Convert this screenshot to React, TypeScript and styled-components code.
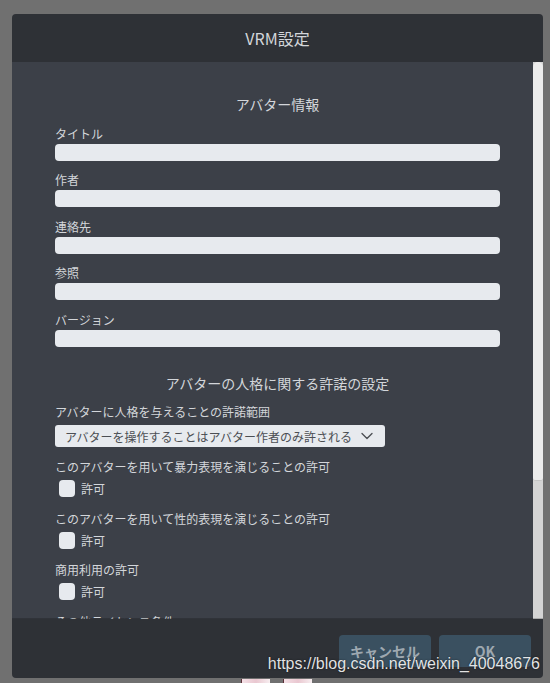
import * as React from 'react';
import styled, { createGlobalStyle } from 'styled-components';
import { ChevronDown } from 'lucide-react';

const colors = {
    page: '#707070',
    header: '#2e3136',
    body: '#3c4048',
    text: '#d3d6da',
    field: '#e7eaee',
    fieldText: '#4c4f54',
    button: '#3a5060',
    buttonText: '#9ea8b0',
    thumb: '#ececec',
    track: '#d4d4d4',
};

const font = `"Noto Sans CJK JP", "Noto Sans", sans-serif`;

const GlobalStyle = createGlobalStyle`
    html, body {
        margin: 0;
        padding: 0;
        background: ${colors.page};
        height: 683px;
        overflow: hidden;
    }
    * { box-sizing: border-box; }
`;

const Page = styled.div`
    position: relative;
    width: 550px;
    height: 683px;
    padding: 14px 0 0 12px;
    font-family: ${font};
`;

const Dialog = styled.section`
    display: flex;
    flex-direction: column;
    width: 531px;
    height: 664px;
    border-radius: 4px;
    overflow: hidden;
    background: ${colors.header};
`;

const Header = styled.header`
    display: flex;
    align-items: center;
    justify-content: center;
    height: 48px;
    flex-shrink: 0;
    color: ${colors.text};
    font-size: 16px;
    box-shadow: 0 1px 0 rgba(0, 0, 0, 0.25);
`;

const BodyRow = styled.div`
    display: flex;
    height: 557px;
    flex-shrink: 0;
`;

const Scroll = styled.div`
    flex: 1;
    overflow: hidden;
    background: ${colors.body};
    padding: 32px 33px 0 43px;
`;

const Scrollbar = styled.div`
    display: flex;
    flex-direction: column;
    width: 10px;
    background: ${colors.track};
`;

const Thumb = styled.div`
    height: 419px;
    background: ${colors.thumb};
    border-radius: 5px 5px 3px 3px;
    border-bottom: 1px solid #c4c4c4;
`;

const SectionTitle = styled.h2<{ top?: number }>`
    margin: ${props => props.top || 0}px 0 11.5px;
    line-height: 20px;
    font-size: 14px;
    font-weight: 400;
    text-align: center;
    color: ${colors.text};
`;

const Group = styled.div<{ after?: number }>`
    display: flex;
    flex-direction: column;
    align-items: flex-start;
    margin-bottom: ${props => (props.after === undefined ? 11.5 : props.after)}px;
`;

const Label = styled.label`
    line-height: 16px;
    font-size: 12px;
    color: ${colors.text};
    white-space: nowrap;
`;

const TextInput = styled.input`
    width: 100%;
    height: 17px;
    margin-top: 2px;
    border: none;
    border-radius: 4px;
    background: ${colors.field};
    outline: none;
`;

const Select = styled.div`
    display: flex;
    align-items: center;
    gap: 5px;
    width: 330px;
    height: 22px;
    margin-top: 5px;
    padding: 0 7px 0 10px;
    border-radius: 3px;
    background: ${colors.field};
    color: ${colors.fieldText};
    font-size: 12px;
    white-space: nowrap;

    svg {
        flex-shrink: 0;
    }
`;

const CheckRow = styled.div`
    display: flex;
    align-items: center;
    gap: 6px;
    height: 17px;
    margin-top: 5px;
    padding-left: 4px;
    font-size: 12px;
    color: ${colors.text};
`;

const Box = styled.span`
    width: 16px;
    height: 17px;
    border-radius: 4px;
    background: ${colors.field};
`;

const Footer = styled.footer`
    display: flex;
    justify-content: flex-end;
    gap: 8px;
    height: 58px;
    padding: 16px 12px 0 0;
    box-shadow: 0 -1px 0 rgba(0, 0, 0, 0.2);
`;

const Button = styled.button`
    width: 92px;
    height: 32px;
    border: none;
    border-radius: 4px;
    background: ${colors.button};
    color: ${colors.buttonText};
    font-family: ${font};
    font-size: 14px;
    font-weight: 700;
`;

const Watermark = styled.div`
    position: absolute;
    right: 10px;
    top: 654px;
    font-family: "Liberation Sans", Arial, sans-serif;
    font-size: 16px;
    line-height: 20px;
    color: rgba(255, 255, 255, 0.88);
    text-shadow: 0 0 2px rgba(0, 0, 0, 0.6);
`;

const Thumbs = styled.div`
    display: flex;
    gap: 13px;
    margin: 1px 0 0 229px;
`;

const Pic = styled.div`
    width: 29px;
    height: 8px;
    background: linear-gradient(90deg, #f4e0e6, #e9c7d0, #f7eef0);
    border-left: 1px solid #5a3038;
`;

const fields = ['タイトル', '作者', '連絡先', '参照', 'バージョン'];

const checks: Array<[string, number]> = [
    ['このアバターを用いて暴力表現を演じることの許可', 14],
    ['このアバターを用いて性的表現を演じることの許可', 13],
    ['商用利用の許可', 14],
];

const App: React.FC = () => {
    return (
        <Page>
            <GlobalStyle />
            <Dialog>
                <Header>VRM設定</Header>
                <BodyRow>
                    <Scroll>
                        <SectionTitle>アバター情報</SectionTitle>
                        {fields.map((f, i) => (
                            <Group key={f} after={i === fields.length - 1 ? 0 : 11.5}>
                                <Label>{f}</Label>
                                <TextInput />
                            </Group>
                        ))}
                        <SectionTitle top={26}>アバターの人格に関する許諾の設定</SectionTitle>
                        <Group after={12}>
                            <Label>アバターに人格を与えることの許諾範囲</Label>
                            <Select>
                                アバターを操作することはアバター作者のみ許される
                                <ChevronDown size={20} strokeWidth={1.6} />
                            </Select>
                        </Group>
                        {checks.map(([text, after]) => (
                            <Group key={text} after={after}>
                                <Label>{text}</Label>
                                <CheckRow>
                                    <Box />
                                    許可
                                </CheckRow>
                            </Group>
                        ))}
                        <Group>
                            <Label>その他ライセンス条件</Label>
                            <TextInput />
                        </Group>
                    </Scroll>
                    <Scrollbar>
                        <Thumb />
                    </Scrollbar>
                </BodyRow>
                <Footer>
                    <Button>キャンセル</Button>
                    <Button>OK</Button>
                </Footer>
            </Dialog>
            <Thumbs>
                <Pic />
                <Pic />
            </Thumbs>
            <Watermark>https://blog.csdn.net/weixin_40048676</Watermark>
        </Page>
    );
};

export default App;
